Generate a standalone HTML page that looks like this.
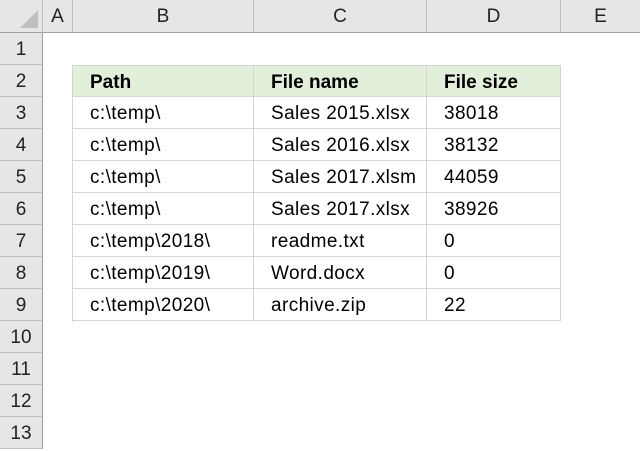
<!DOCTYPE html>
<html><head><style>
body{margin:0;width:640px;height:428px;overflow:hidden;background:#fff;font-family:"Liberation Sans",Carlito,sans-serif;position:relative}
div{position:absolute;box-sizing:border-box}
.ch{top:0;height:33px;background:#e6e6e6;border-right:1px solid #bdbdbd;border-bottom:1px solid #a0a0a0;text-align:center;line-height:34px;font-size:19px;color:#222}
.rh{left:0;width:43px;height:32px;background:#e6e6e6;border-right:1px solid #a0a0a0;border-bottom:1px solid #bdbdbd;text-align:center;line-height:34px;font-size:19px;color:#222}
.c{height:32px;border-right:1px solid #d4d4d4;border-bottom:1px solid #d4d4d4;line-height:34px;font-size:19px;letter-spacing:0.4px;padding-left:17px;color:#000;white-space:nowrap}
.h{background:#e2efda;font-weight:bold;letter-spacing:0}
</style></head><body>
<div class="ch" style="left:0;width:43px"><svg width="43" height="33" style="position:absolute;left:0;top:0"><polygon points="38,10 38,28 20,28" fill="#bfbfbf"/></svg></div>
<div class="ch" style="left:43px;width:30px">A</div>
<div class="ch" style="left:73px;width:181px">B</div>
<div class="ch" style="left:254px;width:173px">C</div>
<div class="ch" style="left:427px;width:134px">D</div>
<div class="ch" style="left:561px;width:79px;border-right:none">E</div>
<div class="rh" style="top:33px">1</div>
<div class="rh" style="top:65px">2</div>
<div class="rh" style="top:97px">3</div>
<div class="rh" style="top:129px">4</div>
<div class="rh" style="top:161px">5</div>
<div class="rh" style="top:193px">6</div>
<div class="rh" style="top:225px">7</div>
<div class="rh" style="top:257px">8</div>
<div class="rh" style="top:289px">9</div>
<div class="rh" style="top:321px">10</div>
<div class="rh" style="top:353px">11</div>
<div class="rh" style="top:385px">12</div>
<div class="rh" style="top:417px">13</div>
<div style="left:72px;top:65px;width:489px;height:257px;border-left:1px solid #d4d4d4;border-top:1px solid #d4d4d4"></div>
<div class="c h" style="left:73px;top:66px;width:181px;height:31px">Path</div>
<div class="c h" style="left:254px;top:66px;width:173px;height:31px">File name</div>
<div class="c h" style="left:427px;top:66px;width:134px;height:31px">File size</div>
<div class="c" style="left:73px;top:97px;width:181px">c:\temp\</div>
<div class="c" style="left:254px;top:97px;width:173px">Sales 2015.xlsx</div>
<div class="c" style="left:427px;top:97px;width:134px">38018</div>
<div class="c" style="left:73px;top:129px;width:181px">c:\temp\</div>
<div class="c" style="left:254px;top:129px;width:173px">Sales 2016.xlsx</div>
<div class="c" style="left:427px;top:129px;width:134px">38132</div>
<div class="c" style="left:73px;top:161px;width:181px">c:\temp\</div>
<div class="c" style="left:254px;top:161px;width:173px">Sales 2017.xlsm</div>
<div class="c" style="left:427px;top:161px;width:134px">44059</div>
<div class="c" style="left:73px;top:193px;width:181px">c:\temp\</div>
<div class="c" style="left:254px;top:193px;width:173px">Sales 2017.xlsx</div>
<div class="c" style="left:427px;top:193px;width:134px">38926</div>
<div class="c" style="left:73px;top:225px;width:181px">c:\temp\2018\</div>
<div class="c" style="left:254px;top:225px;width:173px">readme.txt</div>
<div class="c" style="left:427px;top:225px;width:134px">0</div>
<div class="c" style="left:73px;top:257px;width:181px">c:\temp\2019\</div>
<div class="c" style="left:254px;top:257px;width:173px">Word.docx</div>
<div class="c" style="left:427px;top:257px;width:134px">0</div>
<div class="c" style="left:73px;top:289px;width:181px">c:\temp\2020\</div>
<div class="c" style="left:254px;top:289px;width:173px">archive.zip</div>
<div class="c" style="left:427px;top:289px;width:134px">22</div>
</body></html>
